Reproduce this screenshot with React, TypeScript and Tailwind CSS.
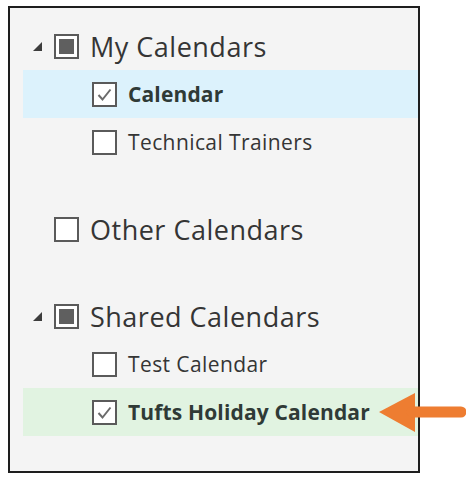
import { Fragment } from 'react'

type Item = { label: string; checked: boolean; bg?: string }

type Group = { label: string; expandable: boolean; items: Item[] }

const groups: Group[] = [
  {
    label: 'My Calendars',
    expandable: true,
    items: [
      { label: 'Calendar', checked: true, bg: 'bg-[#dcf2fc]' },
      { label: 'Technical Trainers', checked: false },
    ],
  },
  { label: 'Other Calendars', expandable: false, items: [] },
  {
    label: 'Shared Calendars',
    expandable: true,
    items: [
      { label: 'Test Calendar', checked: false },
      { label: 'Tufts Holiday Calendar', checked: true, bg: 'bg-[#e1f3e1]' },
    ],
  },
]

function Box({ state }: { state: 'on' | 'off' | 'mixed' }) {
  return (
    <span className="flex h-[25px] w-[25px] shrink-0 items-center justify-center border-2 border-[#5a5a5a] bg-white">
      {state === 'mixed' && <span className="h-[15px] w-[15px] bg-[#5f5f5f]" />}
      {state === 'on' && (
        <svg width="17" height="17" viewBox="0 0 17 17" fill="none">
          <path d="M2.5 9 L6.5 13.5 L14.5 3.5" stroke="#6b6b6b" strokeWidth="2" />
        </svg>
      )}
    </span>
  )
}

function Caret({ show }: { show: boolean }) {
  return (
    <span className="flex w-[9px] shrink-0 items-center justify-center">
      {show && (
        <svg width="9" height="9" viewBox="0 0 9 9">
          <polygon points="9,0 9,9 0,9" fill="#3c3c3c" />
        </svg>
      )}
    </span>
  )
}

export default function App() {
  return (
    <div
      className="relative h-[487px] w-[474px] bg-white"
      style={{ fontFamily: '"Open Sans", "Noto Sans", sans-serif' }}
    >
      <div className="absolute left-[8px] top-[6px] h-[467px] w-[412px] border-2 border-[#1e1e1e] bg-[#f4f4f4] pt-[14px] pl-[13px]">
        {groups.map((g, gi) => (
          <Fragment key={g.label}>
            {gi > 0 && <div className="h-[39px]" />}
            <div className="flex h-[48px] items-center pl-[10px]">
              <Caret show={g.expandable} />
              <span className="ml-[12px]">
                <Box state={g.expandable ? 'mixed' : 'off'} />
              </span>
              <span className="ml-[11px] text-[27px] leading-none tracking-[0.5px] text-[#353535]">
                {g.label}
              </span>
            </div>
            {g.items.map((it) => (
              <div
                key={it.label}
                className={`flex h-[48px] items-center pl-[69px] ${it.bg ?? ''}`}
              >
                <Box state={it.checked ? 'on' : 'off'} />
                <span
                  className={`ml-[11px] text-[21px] leading-none ${
                    it.checked
                      ? 'font-bold tracking-[0.15px] text-[#2f3a36]'
                      : 'tracking-[0.4px] text-[#353535]'
                  }`}
                >
                  {it.label}
                </span>
              </div>
            ))}
          </Fragment>
        ))}
      </div>
      <svg
        className="absolute left-[378px] top-[392px]"
        width="88"
        height="42"
        viewBox="0 0 88 42"
      >
        <polygon points="1,20 37,1 37,40" fill="#ee7d31" />
        <line x1="34" y1="20" x2="83" y2="20" stroke="#ee7d31" strokeWidth="11" strokeLinecap="round" />
      </svg>
    </div>
  )
}
